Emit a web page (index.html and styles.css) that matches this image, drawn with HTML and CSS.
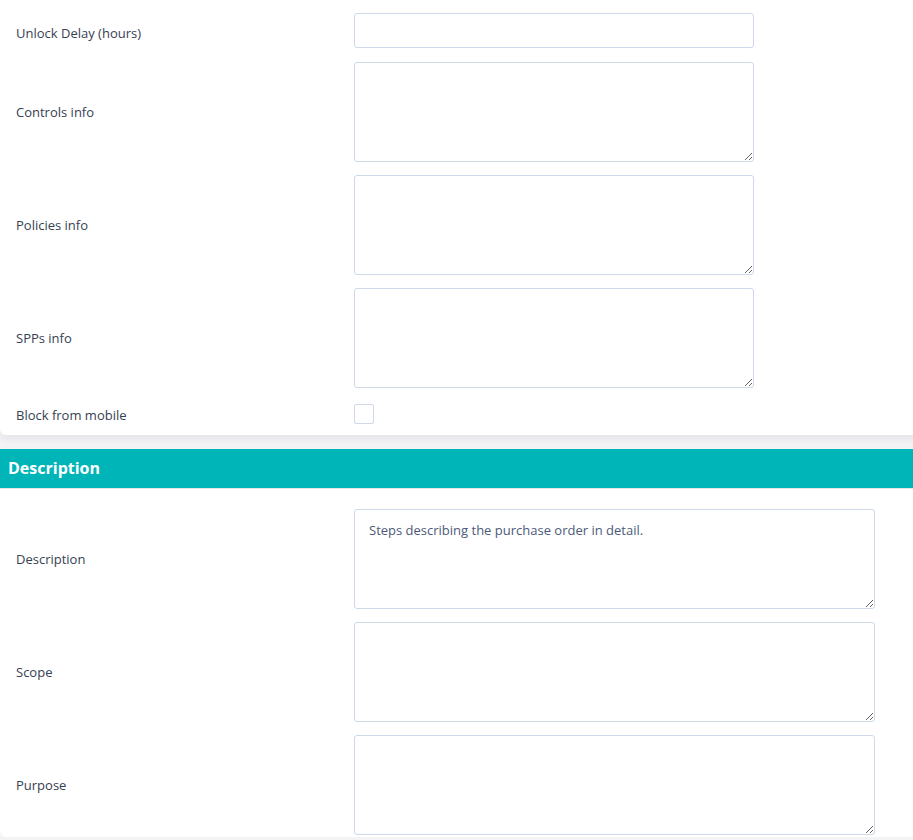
FILE: index.html
```html
<!DOCTYPE html>
<html>
<head>
<meta charset="utf-8">
<link rel="stylesheet" href="styles.css">
</head>
<body>
<div class="card card-top">
  <div class="row row-input">
    <label class="label label-input">Unlock Delay (hours)</label>
    <input class="field field-narrow" type="text">
  </div>
  <div class="row">
    <label class="label">Controls info</label>
    <textarea class="field field-narrow area"></textarea>
  </div>
  <div class="row">
    <label class="label">Policies info</label>
    <textarea class="field field-narrow area"></textarea>
  </div>
  <div class="row">
    <label class="label">SPPs info</label>
    <textarea class="field field-narrow area"></textarea>
  </div>
  <div class="row row-check">
    <label class="label">Block from mobile</label>
    <span class="check"></span>
  </div>
</div>

<div class="section-head">Description</div>
<div class="card card-bottom">
  <div class="row">
    <label class="label">Description</label>
    <textarea class="field field-wide area">Steps describing the purchase order in detail.</textarea>
  </div>
  <div class="row">
    <label class="label">Scope</label>
    <textarea class="field field-wide area"></textarea>
  </div>
  <div class="row">
    <label class="label">Purpose</label>
    <textarea class="field field-wide area"></textarea>
  </div>
</div>
</body>
</html>
```

FILE: styles.css
```css
html, body {
  margin: 0;
  padding: 0;
  background: #f3f3f6;
  overflow-x: hidden;
  font-family: "Open Sans", "Noto Sans", sans-serif;
}

.card {
  background: #ffffff;
  width: calc(100% + 12px);
  display: flex;
  flex-direction: column;
  gap: 13px;
  box-sizing: border-box;
}

.card-top {
  padding: 13px 0 11px 0;
  border-radius: 0 0 6px 6px;
  box-shadow: 0 3px 8px rgba(40, 40, 80, 0.08);
}

.card-bottom {
  padding: 20px 0 2px 0;
  border-radius: 0 0 6px 6px;
}

.section-head {
  margin-top: 14px;
  height: 39px;
  background: #00b5b8;
  color: #ffffff;
  font-weight: 700;
  font-size: 16px;
  line-height: 39px;
  padding-left: 8px;
  border-bottom: 1px solid #e4e6ea;
  box-sizing: content-box;
}

.row {
  display: flex;
  align-items: center;
}

.row-input {
  margin-bottom: 1px;
}

.label {
  width: 338px;
  padding-left: 16px;
  flex: none;
  font-size: 13px;
  color: #364152;
}

.label-input {
  margin-top: 5px;
}

.field {
  box-sizing: border-box;
  border: 1px solid #cfd8e8;
  border-radius: 3px;
  background: #ffffff;
  font-family: "Open Sans", "Noto Sans", sans-serif;
  font-size: 13px;
  color: #4b5a7a;
  margin: 0;
  outline: none;
}

input.field {
  height: 35px;
}

.area {
  display: block;
  height: 100px;
  padding: 11px 14px;
  resize: vertical;
  line-height: 18px;
}

.field-narrow {
  width: 400px;
}

.field-wide {
  width: 521px;
}

.row-check {
  margin-top: 3px;
}

.row-check .label {
  margin-top: 1px;
}

.check {
  display: block;
  width: 20px;
  height: 20px;
  box-sizing: border-box;
  border: 1px solid #cfd8e8;
  border-radius: 2px;
}
```
